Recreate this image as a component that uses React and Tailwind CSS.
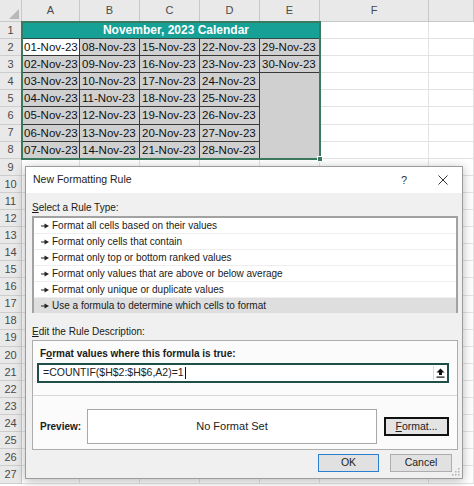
import React from "react";

const cols = ["A", "B", "C", "D", "E", "F", ""];
const rows = Array.from({ length: 27 }, (_, i) => i + 1);

const rules = [
  "Format all cells based on their values",
  "Format only cells that contain",
  "Format only top or bottom ranked values",
  "Format only values that are above or below average",
  "Format only unique or duplicate values",
  "Use a formula to determine which cells to format",
];

const RuleArrow = () => (
  <svg width="8" height="6" viewBox="0 0 8 6" className="shrink-0">
    <line x1="0" y1="3" x2="4" y2="3" stroke="#222" strokeWidth="1" />
    <path d="M3.5 0.5 L8 3 L3.5 5.5 Z" fill="#222" />
  </svg>
);

const dateFor = (r, ci) => {
  const day = ci * 7 + r - 1;
  if (day > 30) return null;
  return `${String(day).padStart(2, "0")}-Nov-23`;
};

const Sheet = () => {
  const cells = [];
  // header row
  cells.push(
    <div
      key="corner"
      className="relative bg-[#e9e9e9] border-r border-b border-[#c8c8c8]"
    >
      <svg width="10" height="10" className="absolute right-[2px] bottom-[2px]">
        <path d="M10 0 L10 10 L0 10 Z" fill="#b8b8b8" />
      </svg>
    </div>
  );
  cols.forEach((c, i) => {
    cells.push(
      <div
        key={"h" + i}
        className="bg-[#e9e9e9] border-r border-b border-[#c8c8c8] flex items-center justify-center text-[11px] text-[#4a4a4a]"
      >
        {c}
      </div>
    );
  });

  rows.forEach((r) => {
    cells.push(
      <div
        key={"r" + r}
        className="bg-[#e9e9e9] border-r border-b border-[#cdcdcd] flex items-center justify-center text-[11px] text-[#4a4a4a]"
      >
        {r}
      </div>
    );
    if (r === 1) {
      cells.push(
        <div
          key="title"
          className="col-span-5 bg-[#17a096] border-b border-[#2b4f48] flex items-center justify-center text-white font-bold text-[12px] pl-[10px]"
        >
          November, 2023 Calendar
        </div>
      );
      cells.push(<div key="1f" className="border-r border-b border-[#e3e3e3]" />);
      cells.push(<div key="1g" className="border-b border-[#e3e3e3]" />);
      return;
    }
    cols.forEach((c, ci) => {
      if (r <= 8 && ci < 5) {
        const d = dateFor(r, ci);
        const active = r === 2 && ci === 0;
        cells.push(
          <div
            key={r + "-" + ci}
            className={`${active ? "bg-white" : "bg-[#d0d0d0]"} border-r ${
              d ? "border-b" : "border-b-0"
            } border-[#383838] text-[11.5px] leading-[16px] text-[#111] pl-[2px] overflow-hidden whitespace-nowrap`}
          >
            {d}
          </div>
        );
      } else {
        cells.push(
          <div key={r + "-" + ci} className="border-r border-b border-[#e3e3e3]" />
        );
      }
    });
  });

  return (
    <div className="grid grid-cols-[22px_58px_60px_60px_60px_60px_109px_1fr] grid-rows-[22px_repeat(27,17.1px)] w-full">
      {cells}
    </div>
  );
};

const Dialog = () => (
  <div className="absolute left-[25px] top-[166px] w-[438px] h-[313px] border border-[#9c9c9c] bg-[#f0f0f0] shadow-[0_2px_10px_rgba(0,0,0,0.28)] flex flex-col text-[10px] text-[#1a1a1a]">
    <div className="h-[26px] bg-white flex items-center pl-[7px] pr-[14px] shrink-0">
      <span className="text-[10.5px] text-[#222]">New Formatting Rule</span>
      <span className="ml-auto mr-[31px] text-[11px] text-[#333]">?</span>
      <svg width="10" height="10" viewBox="0 0 10 10">
        <path d="M0.5 0.5 L9.5 9.5 M9.5 0.5 L0.5 9.5" stroke="#333" strokeWidth="1" />
      </svg>
    </div>

    <div className="flex flex-col pl-[6px] pr-[4px] pt-[9px]">
      <div className="h-[12px] leading-[12px]">
        <span className="underline">S</span>elect a Rule Type:
      </div>
      <div className="mt-[2px] h-[97px] border-2 border-[#a2a2a2] bg-white flex flex-col">
        {rules.map((t, i) => (
          <div
            key={i}
            className={`flex-1 flex items-center gap-[3px] pl-[7px] ${
              i === rules.length - 1
                ? "bg-[#dedede]"
                : "border-b border-[#eeeeee]"
            }`}
          >
            <RuleArrow />
            <span>{t}</span>
          </div>
        ))}
      </div>

      <div className="mt-[13px] h-[12px] leading-[12px]">
        <span className="underline">E</span>dit the Rule Description:
      </div>

      <div className="mt-[2px] h-[110px] border border-[#adadad] bg-[#fbfbfb] flex flex-col">
        <div className="pt-[7px] pl-[7px] h-[12px] leading-[12px] font-bold box-content">
          F<span className="underline">o</span>rmat values where this formula is true:
        </div>
        <div className="mt-[3px] ml-[4px] mr-[8px] h-[20px] border-2 border-[#1f4d48] bg-white flex items-center pl-[4px] pr-[1px]">
          <span className="text-[10.5px] text-[#222]">=COUNTIF($H$2:$H$6,A2)=1</span>
          <span className="w-px h-[12px] bg-[#111] ml-[1px]" />
          <div className="ml-auto w-[13px] h-[14px] border-l border-[#d8d8d8] flex items-center justify-center">
            <svg width="9" height="10" viewBox="0 0 9 10">
              <path d="M4.5 0.5 L8.5 4.5 L6 4.5 L6 7 L3 7 L3 4.5 L0.5 4.5 Z" fill="#111" />
              <rect x="0.5" y="8.5" width="8" height="1.2" fill="#111" />
            </svg>
          </div>
        </div>
        <div className="mt-[12px] h-px bg-[#d6d6d6]" />
        <div className="flex items-center mt-[13px] pl-[7px] pr-[8px]">
          <span className="font-bold w-[47px]">Preview:</span>
          <div className="w-[290px] h-[35px] border border-[#a8a8a8] bg-white flex items-center justify-center text-[11px] text-[#222]">
            No Format Set
          </div>
          <button className="ml-auto w-[65px] h-[19px] border-2 border-[#111] bg-[#e4e4e4] text-[10.5px] text-[#222]">
            <span className="underline">F</span>ormat...
          </button>
        </div>
      </div>

      <div className="mt-[4px] flex justify-end gap-[11px] pr-[6px]">
        <button className="w-[61px] h-[18px] border border-[#2b7fd0] bg-[#e1e1e1] text-[10.5px] text-[#222]">
          OK
        </button>
        <button className="w-[62px] h-[18px] border border-[#adadad] bg-[#e1e1e1] text-[10.5px] text-[#222]">
          Cancel
        </button>
      </div>
    </div>

    <svg width="8" height="8" viewBox="0 0 8 8" className="absolute right-[2px] bottom-[2px]">
      <rect x="6" y="0" width="1.5" height="1.5" fill="#b0b0b0" />
      <rect x="3" y="3" width="1.5" height="1.5" fill="#b0b0b0" />
      <rect x="6" y="3" width="1.5" height="1.5" fill="#b0b0b0" />
      <rect x="0" y="6" width="1.5" height="1.5" fill="#b0b0b0" />
      <rect x="3" y="6" width="1.5" height="1.5" fill="#b0b0b0" />
      <rect x="6" y="6" width="1.5" height="1.5" fill="#b0b0b0" />
    </svg>
  </div>
);

export default function App() {
  return (
    <div className="relative w-[474px] h-[486px] overflow-hidden bg-white font-['Liberation_Sans',Arial,sans-serif]">
      <Sheet />
      {/* selection range A1:E8 */}
      <div className="absolute left-[21px] top-[21px] w-[300px] h-[139px] border-2 border-[#3c7a5f] pointer-events-none" />
      <div className="absolute left-[317px] top-[156px] w-[6px] h-[6px] bg-[#3c7a5f] border border-white" />
      <Dialog />
    </div>
  );
}
